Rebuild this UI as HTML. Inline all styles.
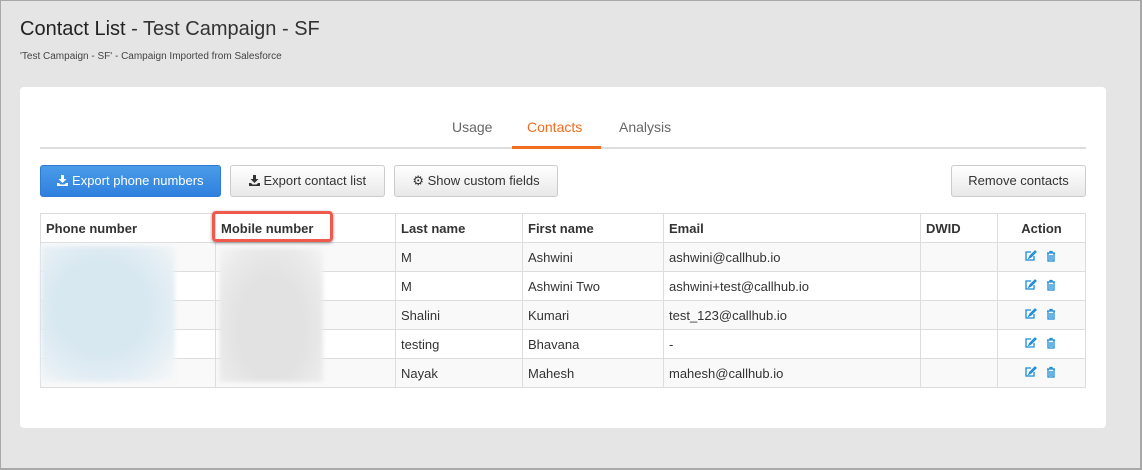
<!DOCTYPE html>
<html><head><style>
*{margin:0;padding:0;box-sizing:border-box}
body{width:1142px;height:470px;background:#e5e5e5;font-family:"Liberation Sans",sans-serif;color:#333;position:relative;overflow:hidden}
.frame{position:absolute;left:0;top:0;width:1142px;height:470px;border:2px solid #a8a8a8;border-left-width:1px;border-top-width:1px}
h1{position:absolute;left:20px;top:18px;font-size:20px;font-weight:normal;color:#333}
h1 b{font-weight:normal;color:#222}
.sub{position:absolute;left:20px;top:51px;font-size:10px;color:#444}
.card{position:absolute;left:20px;top:87px;width:1086px;height:341px;background:#fff;border-radius:4px}
.tabs{position:absolute;left:20px;top:32px;width:1046px;height:30px;border-bottom:2px solid #ddd}
.tab{position:absolute;top:0;font-size:14px;color:#666}
.tab.a{color:#f06c1e}
.ul{position:absolute;left:472px;top:27px;width:89px;height:3px;background:#f06c1e}
.btn{position:absolute;top:78px;height:32px;border:1px solid #ccc;border-radius:3px;background:linear-gradient(#fff,#e8e8e8);font-size:13px;line-height:30px;text-align:center;color:#333}
.btn svg{vertical-align:-1px}
.btn.p{background:linear-gradient(#4a9ce8,#2f80de);border-color:#2d7bd6;color:#fff}
table{position:absolute;left:20px;top:126px;width:1046px;border-collapse:collapse;font-size:13px}
td,th{border:1px solid #ddd;height:29px;padding:0 5px;text-align:left}
th{font-weight:bold;color:#333}
tr:nth-child(even) td{background:#f9f9f9}
.act{text-align:center}
.hl{position:absolute;left:212px;top:211px;width:121px;height:31px;border:3px solid #ef5a4d;border-radius:4px;box-shadow:0 1px 3px rgba(0,0,0,.4)}
.b1{position:absolute;left:41px;top:246px;width:134px;height:136px;background:radial-gradient(ellipse at 45% 45%,#d8e8f1 45%,#e4eef4 70%,#f6f7f8 95%);filter:blur(2px)}
.b2{position:absolute;left:219px;top:248px;width:104px;height:134px;background:radial-gradient(ellipse at 50% 60%,#e2e2e2 45%,#eaeaea 75%,#f4f4f4 98%);filter:blur(2px)}
</style></head><body>
<div class="frame"></div>
<h1><b>Contact List</b> - Test Campaign - SF</h1>
<div class="sub">'Test Campaign - SF' - Campaign Imported from Salesforce</div>
<div class="card">
<div class="tabs"><span class="tab" style="left:412px">Usage</span><span class="tab a" style="left:487px">Contacts</span><span class="tab" style="left:579px">Analysis</span><div class="ul"></div></div>
<div class="btn p" style="left:20px;width:181px"><svg width="11" height="11" viewBox="0 0 11 11"><path d="M4 0h3v4h2.5L5.5 8 1.5 4H4z M0 8h2l1.5 1.5h4L9 8h2v3H0z" fill="#fff"/></svg> Export phone numbers</div>
<div class="btn" style="left:210px;width:155px"><svg width="11" height="11" viewBox="0 0 11 11"><path d="M4 0h3v4h2.5L5.5 8 1.5 4H4z M0 8h2l1.5 1.5h4L9 8h2v3H0z" fill="#333"/></svg> Export contact list</div>
<div class="btn" style="left:374px;width:164px">&#x2699; Show custom fields</div>
<div class="btn" style="left:931px;width:135px">Remove contacts</div>
<table>
<tr><th style="width:175px">Phone number</th><th style="width:180px">Mobile number</th><th style="width:127px">Last name</th><th style="width:141px">First name</th><th style="width:257px">Email</th><th style="width:77px">DWID</th><th class="act">Action</th></tr>
<tr><td></td><td></td><td>M</td><td>Ashwini</td><td>ashwini@callhub.io</td><td></td><td class="act"><svg width="40" height="14" viewBox="0 0 40 14"><g fill="none" stroke="#1a8bd8" stroke-width="1.3"><path d="M9 3H4v8h8V7"/><path d="M7 9l1-2 5-5 1 1-5 5z"/><path d="M25 4h8M28 4V2.5h2V4M26 4.5v7.5h6V4.5M28 6v5M30 6v5"/></g></svg></td></tr>
<tr><td></td><td></td><td>M</td><td>Ashwini Two</td><td>ashwini+test@callhub.io</td><td></td><td class="act"><svg width="40" height="14" viewBox="0 0 40 14"><g fill="none" stroke="#1a8bd8" stroke-width="1.3"><path d="M9 3H4v8h8V7"/><path d="M7 9l1-2 5-5 1 1-5 5z"/><path d="M25 4h8M28 4V2.5h2V4M26 4.5v7.5h6V4.5M28 6v5M30 6v5"/></g></svg></td></tr>
<tr><td></td><td></td><td>Shalini</td><td>Kumari</td><td>test_123@callhub.io</td><td></td><td class="act"><svg width="40" height="14" viewBox="0 0 40 14"><g fill="none" stroke="#1a8bd8" stroke-width="1.3"><path d="M9 3H4v8h8V7"/><path d="M7 9l1-2 5-5 1 1-5 5z"/><path d="M25 4h8M28 4V2.5h2V4M26 4.5v7.5h6V4.5M28 6v5M30 6v5"/></g></svg></td></tr>
<tr><td></td><td></td><td>testing</td><td>Bhavana</td><td>-</td><td></td><td class="act"><svg width="40" height="14" viewBox="0 0 40 14"><g fill="none" stroke="#1a8bd8" stroke-width="1.3"><path d="M9 3H4v8h8V7"/><path d="M7 9l1-2 5-5 1 1-5 5z"/><path d="M25 4h8M28 4V2.5h2V4M26 4.5v7.5h6V4.5M28 6v5M30 6v5"/></g></svg></td></tr>
<tr><td></td><td></td><td>Nayak</td><td>Mahesh</td><td>mahesh@callhub.io</td><td></td><td class="act"><svg width="40" height="14" viewBox="0 0 40 14"><g fill="none" stroke="#1a8bd8" stroke-width="1.3"><path d="M9 3H4v8h8V7"/><path d="M7 9l1-2 5-5 1 1-5 5z"/><path d="M25 4h8M28 4V2.5h2V4M26 4.5v7.5h6V4.5M28 6v5M30 6v5"/></g></svg></td></tr>
</table>
</div>
<div class="b1"></div><div class="b2"></div>
<div class="hl"></div>
</body></html>
